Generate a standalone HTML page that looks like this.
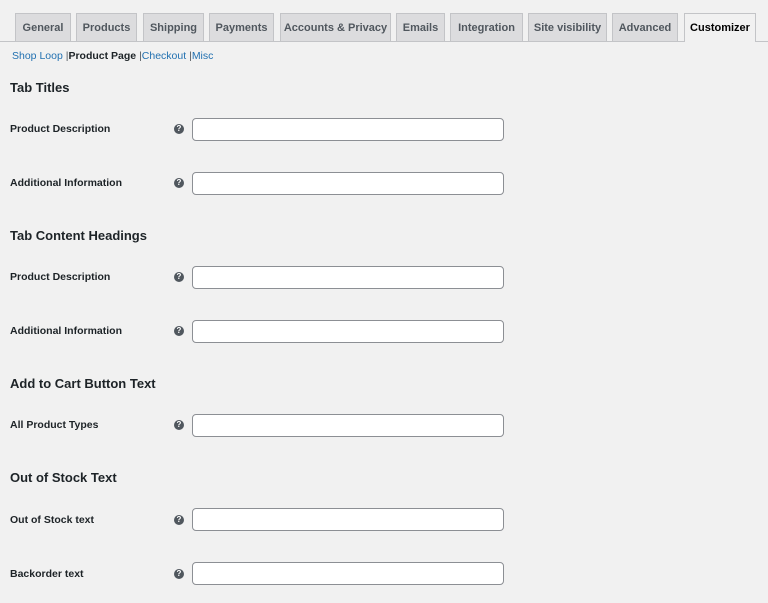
<!DOCTYPE html>
<html><head><style>
body{margin:0;background:#f1f1f1;font-family:"Liberation Sans",sans-serif;color:#1d2327;width:768px;height:603px;overflow:hidden;position:relative}
.tabs{position:absolute;top:13px;left:0;width:768px;height:28px;border-bottom:1px solid #c3c4c7}
.tab{position:absolute;top:0;background:#dcdcde;border:1px solid #c3c4c7;border-bottom:none;box-sizing:border-box;height:28px;font-size:11px;font-weight:bold;color:#50575e;text-align:center;line-height:28px;white-space:nowrap}
.tab.act{background:#f1f1f1;color:#000;height:29px}
.sub{position:absolute;top:50px;left:12px;font-size:10.5px;color:#2271b1}
.sub b{color:#1d2327}
.sub .s{color:#50575e}
h2{position:absolute;left:10px;margin:0;font-size:13px;font-weight:bold;color:#1d2327}
.l{position:absolute;left:10px;font-size:10.5px;font-weight:bold}
.q{position:absolute;left:174px;width:10px;height:10px;border-radius:50%;background:#50575e;color:#fff;font-size:8px;font-weight:bold;text-align:center;line-height:10px}
.i{position:absolute;left:192px;width:312px;height:23px;background:#fff;border:1px solid #8c8f94;border-radius:4px;box-sizing:border-box}
</style></head><body>
<div class="tabs">
<div class="tab" style="left:15px;width:56px">General</div>
<div class="tab" style="left:76px;width:61px">Products</div>
<div class="tab" style="left:143px;width:61px">Shipping</div>
<div class="tab" style="left:209px;width:65px">Payments</div>
<div class="tab" style="left:280px;width:111px">Accounts &amp; Privacy</div>
<div class="tab" style="left:396px;width:49px">Emails</div>
<div class="tab" style="left:450px;width:73px">Integration</div>
<div class="tab" style="left:528px;width:79px">Site visibility</div>
<div class="tab" style="left:612px;width:66px">Advanced</div>
<div class="tab act" style="left:684px;width:72px">Customizer</div>
</div>
<div class="sub">Shop Loop <span class="s">|</span><b>Product Page</b> <span class="s">|</span>Checkout <span class="s">|</span>Misc</div>
<h2 style="top:80px">Tab Titles</h2>
<div class="l" style="top:123px">Product Description</div><div class="q" style="top:124px">?</div><div class="i" style="top:118px"></div>
<div class="l" style="top:177px">Additional Information</div><div class="q" style="top:178px">?</div><div class="i" style="top:172px"></div>
<h2 style="top:228px">Tab Content Headings</h2>
<div class="l" style="top:271px">Product Description</div><div class="q" style="top:272px">?</div><div class="i" style="top:266px"></div>
<div class="l" style="top:325px">Additional Information</div><div class="q" style="top:326px">?</div><div class="i" style="top:320px"></div>
<h2 style="top:376px">Add to Cart Button Text</h2>
<div class="l" style="top:419px">All Product Types</div><div class="q" style="top:420px">?</div><div class="i" style="top:414px"></div>
<h2 style="top:470px">Out of Stock Text</h2>
<div class="l" style="top:514px">Out of Stock text</div><div class="q" style="top:515px">?</div><div class="i" style="top:508px"></div>
<div class="l" style="top:568px">Backorder text</div><div class="q" style="top:569px">?</div><div class="i" style="top:562px"></div>
</body></html>
